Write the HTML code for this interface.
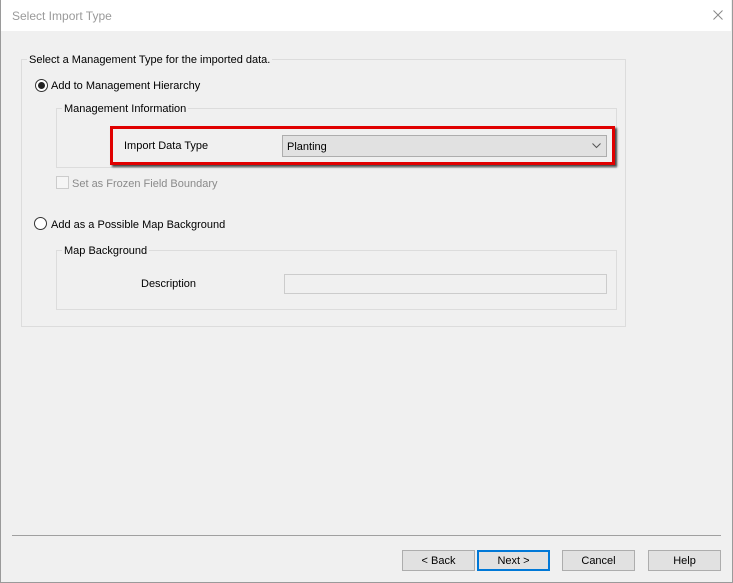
<!DOCTYPE html>
<html><head><meta charset="utf-8"><style>
*{box-sizing:border-box;margin:0;padding:0}
body{width:733px;height:583px;overflow:hidden;background:#f0f0f0;font-family:"Liberation Sans",sans-serif;font-size:11px;color:#000;position:relative}
.a{position:absolute}
.win{left:0;top:0;width:733px;height:583px;border:1px solid #9a9a9a;border-top:none}
.title{left:1px;top:0;width:730px;height:31px;background:#fff}
.t{white-space:nowrap;line-height:13px}
.grp{border:1px solid #dcdcdc}
.lbl{background:#f0f0f0;padding:0 2px}
.btn{background:#e1e1e1;border:1px solid #adadad;text-align:center;line-height:21px;font-size:11px}
.radio{width:13px;height:13px;border:1px solid #333;border-radius:50%;background:#fff}
</style></head><body>
<div class="a win"></div>
<div class="a title"></div>
<div class="a t" style="left:12px;top:10px;font-size:12px;color:#9a9a9a">Select Import Type</div>
<svg class="a" style="left:713px;top:10px" width="10" height="10"><path d="M0.5 0.5L9.5 9.5M9.5 0.5L0.5 9.5" stroke="#888" stroke-width="1"/></svg>

<div class="a grp" style="left:21px;top:59px;width:605px;height:268px"></div>
<div class="a t lbl" style="left:27px;top:54px">Select a Management Type for the imported data.</div>

<div class="a radio" style="left:35px;top:79px"></div>
<div class="a" style="left:38px;top:82px;width:7px;height:7px;border-radius:50%;background:#222"></div>
<div class="a t" style="left:51px;top:80px">Add to Management Hierarchy</div>

<div class="a grp" style="left:56px;top:108px;width:561px;height:60px"></div>
<div class="a t lbl" style="left:62px;top:103px">Management Information</div>

<div class="a" style="left:110px;top:126px;width:505px;height:39px;border:3px solid #e00000;box-shadow:2px 2px 2px #444;background:#f0f0f0"></div>
<div class="a t" style="left:124px;top:140px">Import Data Type</div>
<div class="a" style="left:282px;top:135px;width:325px;height:22px;background:#e1e1e1;border:1px solid #adadad"></div>
<div class="a t" style="left:287px;top:141px">Planting</div>
<svg class="a" style="left:592px;top:143px" width="9" height="6"><path d="M0.5 0.5L4.5 4.5L8.5 0.5" stroke="#555" fill="none"/></svg>

<div class="a" style="left:56px;top:176px;width:13px;height:13px;border:1px solid #ccc;background:#f5f5f5"></div>
<div class="a t" style="left:72px;top:178px;color:#8a8a8a">Set as Frozen Field Boundary</div>

<div class="a radio" style="left:34px;top:217px"></div>
<div class="a t" style="left:51px;top:219px">Add as a Possible Map Background</div>

<div class="a grp" style="left:56px;top:250px;width:561px;height:60px"></div>
<div class="a t lbl" style="left:62px;top:245px">Map Background</div>
<div class="a t" style="left:141px;top:278px">Description</div>
<div class="a" style="left:284px;top:274px;width:323px;height:20px;background:#f0f0f0;border:1px solid #ccc"></div>

<div class="a" style="left:12px;top:535px;width:709px;height:1px;background:#a0a0a0"></div>
<div class="a btn" style="left:402px;top:550px;width:73px;height:21px;line-height:21px">&lt; Back</div>
<div class="a btn" style="left:477px;top:550px;width:73px;height:21px;border:2px solid #0078d7;line-height:19px">Next &gt;</div>
<div class="a btn" style="left:562px;top:550px;width:73px;height:21px;line-height:21px">Cancel</div>
<div class="a btn" style="left:648px;top:550px;width:73px;height:21px;line-height:21px">Help</div>
</body></html>
